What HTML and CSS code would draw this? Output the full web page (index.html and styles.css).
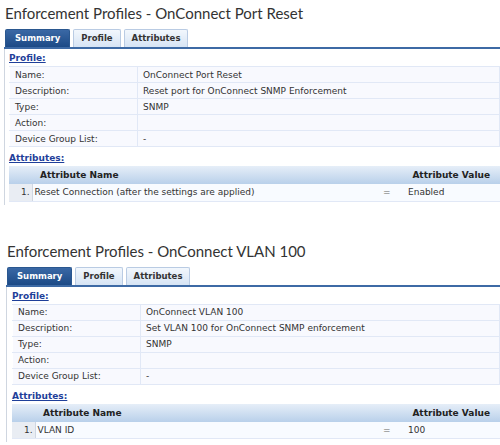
FILE: index.html
```html
<!DOCTYPE html>
<html lang="en">
<head>
    <meta charset="UTF-8">
    <title>Enforcement Profiles</title>
    <link rel="stylesheet" href="styles.css">
</head>
<body>
    <div class="profile">
        <h1 class="title">Enforcement Profiles - OnConnect Port Reset</h1>
        <ul class="tabs">
            <li class="tab active">Summary</li>
            <li class="tab">Profile</li>
            <li class="tab">Attributes</li>
        </ul>
        <div class="tab-body">
            <a href="#" class="section-link">Profile:</a>
            <table class="summary">
                <tr><td class="label">Name:</td><td>OnConnect Port Reset</td></tr>
                <tr><td class="label">Description:</td><td>Reset port for OnConnect SNMP Enforcement</td></tr>
                <tr><td class="label">Type:</td><td>SNMP</td></tr>
                <tr><td class="label">Action:</td><td></td></tr>
                <tr><td class="label">Device Group List:</td><td>-</td></tr>
            </table>
            <a href="#" class="section-link">Attributes:</a>
            <table class="attrs">
                <thead>
                    <tr>
                        <th class="num"></th>
                        <th class="name">Attribute Name</th>
                        <th class="eq"></th>
                        <th class="value">Attribute Value</th>
                    </tr>
                </thead>
                <tbody>
                    <tr>
                        <td class="num">1.</td>
                        <td>Reset Connection (after the settings are applied)</td>
                        <td class="eq">=</td>
                        <td class="value">Enabled</td>
                    </tr>
                </tbody>
            </table>
        </div>
    </div>

    <div class="profile second">
        <h1 class="title">Enforcement Profiles - OnConnect VLAN 100</h1>
        <ul class="tabs">
            <li class="tab active">Summary</li>
            <li class="tab">Profile</li>
            <li class="tab">Attributes</li>
        </ul>
        <div class="tab-body">
            <a href="#" class="section-link">Profile:</a>
            <table class="summary">
                <tr><td class="label">Name:</td><td>OnConnect VLAN 100</td></tr>
                <tr><td class="label">Description:</td><td>Set VLAN 100 for OnConnect SNMP enforcement</td></tr>
                <tr><td class="label">Type:</td><td>SNMP</td></tr>
                <tr><td class="label">Action:</td><td></td></tr>
                <tr><td class="label">Device Group List:</td><td>-</td></tr>
            </table>
            <a href="#" class="section-link">Attributes:</a>
            <table class="attrs">
                <thead>
                    <tr>
                        <th class="num"></th>
                        <th class="name">Attribute Name</th>
                        <th class="eq"></th>
                        <th class="value">Attribute Value</th>
                    </tr>
                </thead>
                <tbody>
                    <tr>
                        <td class="num">1.</td>
                        <td>VLAN ID</td>
                        <td class="eq">=</td>
                        <td class="value">100</td>
                    </tr>
                </tbody>
            </table>
        </div>
    </div>
</body>
</html>
```

FILE: styles.css
```css
body {
    margin: 0;
    padding: 0;
    background-color: #fff;
    font-family: "DejaVu Sans", Verdana, sans-serif;
    font-size: 9px;
    color: #333;
}
.profile {
    padding: 3px 0 0 4px;
}
.profile.second {
    margin-top: 33px;
    padding-left: 6px;
}
.title {
    font-family: "Lato", "Segoe UI", sans-serif;
    font-weight: normal;
    font-size: 15px;
    color: #333;
    margin: 0 0 6px 1px;
    line-height: 20px;
}
.tabs {
    list-style: none;
    margin: 0;
    padding: 0 0 0 1px;
    display: flex;
    gap: 3px;
    border-bottom: 2px solid #3d6aa5;
}
.tab {
    height: 17px;
    line-height: 17px;
    padding: 0 7px;
    font-size: 8.5px;
    font-weight: bold;
    color: #333;
    background: linear-gradient(#f2f7fd, #d6e4f4);
    border: 1px solid #b9cbe3;
    border-bottom: none;
    border-radius: 2px 2px 0 0;
}
.tab.active {
    color: #fff;
    padding: 0 9px;
    background: linear-gradient(#3a68a5, #1c4a86);
    border-color: #2a578f;
}
.tab-body {
    border-left: 1px solid #cfd6e0;
    padding: 3px 0 3px 4px;
}
.second .tab-body {
    padding-left: 5px;
}
.section-link {
    display: block;
    color: #1f3f9a;
    font-weight: bold;
    text-decoration: underline;
    line-height: 12px;
    margin-bottom: 2px;
}
table {
    width: 100%;
    border-collapse: collapse;
}
.summary {
    margin-bottom: 5px;
}
.summary td {
    height: 15px;
    padding: 0 0 0 5px;
    background-color: #f8f9fe;
    border: 1px solid #e1e8f6;
    border-left-color: #fff;
}
.summary td.label {
    width: 122px;
}
.attrs th,
.attrs td {
    box-sizing: border-box;
    white-space: nowrap;
}
.attrs th {
    height: 18px;
    padding: 0 0 0 8px;
    background: linear-gradient(#e6eef8, #b9d0ea);
    color: #222;
    font-weight: bold;
    text-align: left;
}
.attrs td {
    height: 17px;
    padding: 0 0 0 2px;
    background-color: #f8fbff;
    border-bottom: 1px solid #e1e8f6;
}
.attrs .num {
    width: 23px;
    padding: 0 2px 0 0;
    text-align: right;
    background-color: #e9edf3;
    border-right: 1px solid #d0d7e2;
}
.attrs th.num {
    background: linear-gradient(#e6eef8, #b9d0ea);
    border-right: none;
}
.attrs .eq {
    width: 27px;
    color: #666;
}
.attrs td.eq {
    padding-left: 5px;
}
.attrs .value {
    width: 95px;
}
.attrs th.value {
    text-align: right;
    padding: 0 10px 0 0;
}
.attrs td.value {
    padding-left: 3px;
}
```
